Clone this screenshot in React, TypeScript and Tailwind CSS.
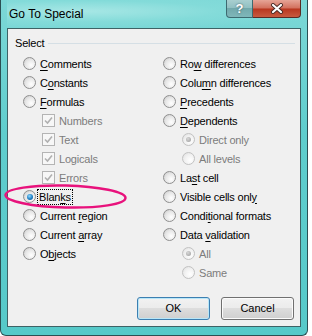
import type { ReactNode } from "react";

type Item = {
  label: ReactNode;
  kind: "radio" | "check";
  sub?: boolean;
  checked?: boolean;
  disabled?: boolean;
  focus?: boolean;
};

const u = (s: string) => <u className="underline-offset-[2px]">{s}</u>;

const leftItems: Item[] = [
  { label: <>{u("C")}omments</>, kind: "radio" },
  { label: <>C{u("o")}nstants</>, kind: "radio" },
  { label: <>{u("F")}ormulas</>, kind: "radio" },
  { label: "Numbers", kind: "check", sub: true, checked: true, disabled: true },
  { label: "Text", kind: "check", sub: true, checked: true, disabled: true },
  { label: "Logicals", kind: "check", sub: true, checked: true, disabled: true },
  { label: "Errors", kind: "check", sub: true, checked: true, disabled: true },
  { label: <>Blan{u("k")}s</>, kind: "radio", checked: true, focus: true },
  { label: <>Current {u("r")}egion</>, kind: "radio" },
  { label: <>Current {u("a")}rray</>, kind: "radio" },
  { label: <>O{u("b")}jects</>, kind: "radio" },
];

const rightItems: Item[] = [
  { label: <>Ro{u("w")} differences</>, kind: "radio" },
  { label: <>Colu{u("m")}n differences</>, kind: "radio" },
  { label: <>{u("P")}recedents</>, kind: "radio" },
  { label: <>{u("D")}ependents</>, kind: "radio" },
  { label: "Direct only", kind: "radio", sub: true, checked: true, disabled: true },
  { label: "All levels", kind: "radio", sub: true, disabled: true },
  { label: <>La{u("s")}t cell</>, kind: "radio" },
  { label: <>Visible cells onl{u("y")}</>, kind: "radio" },
  { label: <>Condi{u("t")}ional formats</>, kind: "radio" },
  { label: <>Data {u("v")}alidation</>, kind: "radio" },
  { label: "All", kind: "radio", sub: true, checked: true, disabled: true },
  { label: "Same", kind: "radio", sub: true, disabled: true },
];

function Radio({ checked, disabled }: { checked?: boolean; disabled?: boolean }) {
  return (
    <span
      className={
        disabled
          ? "flex h-[13px] w-[13px] shrink-0 items-center justify-center rounded-full border border-[#c2c2c2] bg-[radial-gradient(circle_at_65%_65%,#ffffff_0%,#f0f0f0_55%,#dcdcdc_100%)]"
          : "flex h-[13px] w-[13px] shrink-0 items-center justify-center rounded-full border border-[#8f8f8f] bg-[radial-gradient(circle_at_65%_65%,#ffffff_0%,#e6e6e6_55%,#c4c4c4_100%)]"
      }
    >
      {checked &&
        (disabled ? (
          <span className="h-[5px] w-[5px] rounded-full bg-[radial-gradient(circle_at_40%_35%,#d8d8d8_0%,#9a9a9a_100%)]" />
        ) : (
          <span className="h-[6px] w-[6px] rounded-full bg-[radial-gradient(circle_at_40%_35%,#8fd8ff_0%,#1f7fc4_55%,#0b4f86_100%)]" />
        ))}
    </span>
  );
}

function Check() {
  return (
    <span className="flex h-[13px] w-[13px] shrink-0 items-center justify-center border border-[#b4b4b4] bg-[#f7f7f7]">
      <svg width="11" height="11" viewBox="0 0 11 11">
        <path d="M2 5.5 L4.5 8 L9 2.5" fill="none" stroke="#b0b0b0" strokeWidth="1.6" />
      </svg>
    </span>
  );
}

function Row({ item }: { item: Item }) {
  return (
    <div className={`flex h-[19px] items-center gap-[4px] ${item.sub ? "pl-[19px]" : ""}`}>
      {item.kind === "radio" ? <Radio checked={item.checked} disabled={item.disabled} /> : <Check />}
      <span
        className={`whitespace-nowrap leading-[14px] ${item.disabled ? "text-[#7c7c7c]" : "text-black"} ${
          item.focus ? "-mx-[2px] px-[1px] outline outline-1 outline-dotted outline-black" : ""
        }`}
      >
        {item.label}
      </span>
    </div>
  );
}

function DlgButton({ children, def }: { children: ReactNode; def?: boolean }) {
  return (
    <button
      type="button"
      className={`h-[23px] w-[73px] rounded-[3px] border text-[11px] text-black bg-[linear-gradient(#f2f2f2_0%,#ebebeb_50%,#dddddd_50%,#cfcfcf_100%)] ${
        def ? "border-[#3c7fb1] shadow-[inset_0_0_0_1px_#b8e6f8]" : "border-[#707070] shadow-[inset_0_0_0_1px_#fbfbfb]"
      }`}
    >
      {children}
    </button>
  );
}

export default function App() {
  return (
    <div className="relative h-[336px] w-[312px] bg-white font-['Liberation_Sans',Arial,sans-serif]">
      <div className="flex h-[336px] w-[308px] flex-col rounded-b-[6px] border-x border-b border-[#2b4f53] bg-[linear-gradient(180deg,#7dd8d7_0%,#5fcdcd_40%,#56c9c9_100%)] px-[6px] pb-[8px]">
        <div className="flex h-[28px] items-start bg-[radial-gradient(ellipse_at_25%_40%,#a7e7e5_0%,#83dbd9_45%,transparent_80%)]">
          <span className="pl-[2px] pt-[7px] text-[12px] leading-[14px] text-black">Go To Special</span>
          <div className="ml-auto flex">
            <div className="flex h-[18px] w-[27px] items-center justify-center rounded-bl-[4px] border border-t-0 border-[#3d6a70] bg-[linear-gradient(#a9cfd0_0%,#8fbfc1_50%,#72a9ac_50%,#7fb7ba_100%)] text-[13px] font-bold leading-none text-white [text-shadow:0_0_2px_#2d4d52]">
              ?
            </div>
            <div className="flex h-[18px] w-[48px] items-center justify-center rounded-br-[4px] border border-l-0 border-t-0 border-[#5a2a24] bg-[linear-gradient(#e6a597_0%,#d2705d_48%,#b8361f_52%,#c85a3f_100%)]">
              <svg width="14" height="11" viewBox="0 0 14 11">
                <path d="M3 2 L11 9 M11 2 L3 9" stroke="#4a2a25" strokeWidth="4" strokeLinecap="round" />
                <path d="M3 2 L11 9 M11 2 L3 9" stroke="#ffffff" strokeWidth="2.2" strokeLinecap="round" />
              </svg>
            </div>
          </div>
        </div>

        <div className="flex flex-1 flex-col border border-[#3e6265] bg-[#f0f0f0] text-[11px] tracking-[-0.2px]">
          <div className="mt-[7px] flex h-[14px] items-center gap-[4px] pl-[7px] pr-[5px]">
            <span className="leading-[14px] text-black">Select</span>
            <div className="h-px flex-1 bg-[#d5dfe5]" />
          </div>

          <div className="mt-[4px] flex pl-[15px]">
            <div className="w-[140px]">
              {leftItems.map((it, i) => (
                <Row key={i} item={it} />
              ))}
            </div>
            <div>
              {rightItems.map((it, i) => (
                <Row key={i} item={it} />
              ))}
            </div>
          </div>

          <div className="mt-[15px] flex justify-end gap-[11px] pr-[6px] tracking-normal">
            <DlgButton def>OK</DlgButton>
            <DlgButton>Cancel</DlgButton>
          </div>
        </div>
      </div>

      <svg className="pointer-events-none absolute left-0 top-0" width="312" height="336">
        <ellipse cx="65.5" cy="196.5" rx="60" ry="11" fill="none" stroke="#e8127c" strokeWidth="2.5" transform="rotate(1.5 65.5 196.5)" />
      </svg>
    </div>
  );
}
